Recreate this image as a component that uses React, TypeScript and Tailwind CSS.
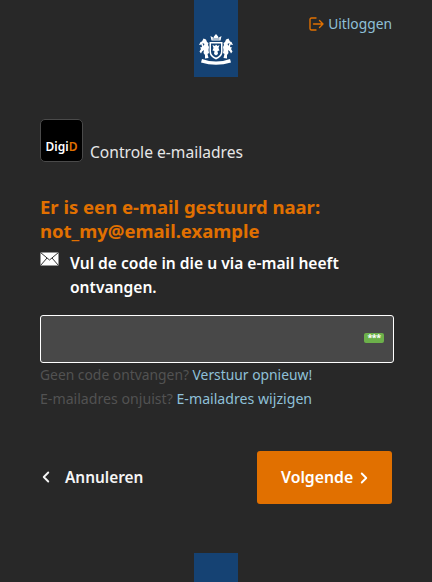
import { ChevronLeft, ChevronRight } from 'lucide-react'

const font = { fontFamily: '"Noto Sans", sans-serif' }

function Crest() {
  return (
    <svg width="36" height="34" viewBox="0 0 36 34" fill="none">
      {/* crown */}
      <path d="M13.5 8.5 L12.5 4 L15 5.5 L18 2 L21 5.5 L23.5 4 L22.5 8.5 Z" fill="#fff" />
      <path d="M14.5 7 H21.5" stroke="#154273" strokeWidth="0.7" />
      <path d="M15.5 3.5 V6 M20.5 3.5 V6" stroke="#154273" strokeWidth="0.5" />
      {/* shield */}
      <path d="M11.5 10 H24.5 V20 Q24.5 25 18 27.5 Q11.5 25 11.5 20 Z" fill="#fff" />
      <path d="M13 11.5 H23 V19.5 Q23 23.5 18 25.5 Q13 23.5 13 19.5 Z" fill="#154273" />
      <path d="M14.5 13 L17 14 L18 12.5 L19.5 14 L21.5 13 L20.5 16 L21.5 18.5 L19.5 19 L20 22 L18 23.5 L16 22 L16.5 19 L14.5 18.5 L15.5 16 Z" fill="#fff" />
      {/* left lion */}
      <path d="M5.5 6.5 L8 7.5 L9 10 L10.5 11 L10 13 L11 15 L10.5 18 L11 21 L9.5 22 L10.5 26 L7 26.5 L7 23 L5.5 21 L6 18 L4 19.5 L3 21.5 L1.5 19.5 L3 17 L2 15.5 L4 15 L3.5 12.5 L1 13 L2.5 10 L4 9.5 Z" fill="#fff" />
      <path d="M4.5 11 L6.5 12 L5.5 14 Z" fill="#154273" />
      {/* right lion */}
      <path d="M30.5 6.5 L28 7.5 L27 10 L25.5 11 L26 13 L25 15 L25.5 18 L25 21 L26.5 22 L25.5 26 L29 26.5 L29 23 L30.5 21 L30 18 L32 19.5 L33 21.5 L34.5 19.5 L33 17 L34 15.5 L32 15 L32.5 12.5 L35 13 L33.5 10 L32 9.5 Z" fill="#fff" />
      <path d="M31.5 11 L29.5 12 L30.5 14 Z" fill="#154273" />
      {/* ribbon */}
      <path d="M4 27 Q18 32 32 27 L33 30.5 Q18 35 3 30.5 Z" fill="#fff" />
    </svg>
  )
}

export default function App() {
  return (
    <div className="relative flex h-[582px] w-[432px] flex-col overflow-hidden bg-[#282828] px-10" style={font}>
      {/* Ribbon */}
      <div className="flex justify-center">
        <div className="flex h-[77px] w-11 items-end justify-center bg-[#154273] pb-[11px]">
          <Crest />
        </div>
      </div>

      <a className="absolute right-10 top-[14px] flex items-center gap-[3px] text-[13.8px] leading-5 text-[#8fc0d8]">
        <svg width="16" height="16" viewBox="0 0 16 16" fill="none" stroke="#e17000" strokeWidth="1.4">
          <path d="M7 2 H2.5 Q1 2 1 3.5 V12.5 Q1 14 2.5 14 H7" strokeLinecap="round" />
          <path d="M4.5 8 H14 M10.5 4.5 L14 8 L10.5 11.5" strokeLinecap="round" strokeLinejoin="round" />
        </svg>
        Uitloggen
      </a>

      {/* DigiD heading */}
      <div className="mt-[42px] flex items-end gap-[7px]">
        <div className="flex h-[43px] w-[43px] items-end justify-center rounded-[5px] border border-[#4a4a4a] bg-black pb-[6px] text-[12px] font-semibold leading-4">
          <span className="text-white">Digi</span>
          <span className="text-[#e17000]">D</span>
        </div>
        <h1 className="text-[15.6px] leading-5 text-[#e6e6e6]">Controle e-mailadres</h1>
      </div>

      <h2 className="mt-[33px] text-[18.5px] font-bold leading-6 text-[#e17000]">
        Er is een e-mail gestuurd naar:
        <br />
        not_my@email.example
      </h2>

      <div className="flex gap-[11px]">
        <svg className="mt-[9px] shrink-0" width="19" height="14" viewBox="0 0 19 14">
          <rect x="0.5" y="0.5" width="18" height="13" fill="#fff" />
          <path d="M0.5 0.5 L9.5 8 L18.5 0.5 M0.5 13.5 L7 6 M18.5 13.5 L12 6" fill="none" stroke="#333" strokeWidth="1" />
        </svg>
        <p className="mt-[8px] text-[15.6px] font-semibold leading-6 text-white">
          Vul de code in die u via e-mail heeft ontvangen.
        </p>
      </div>

      <div className="-mr-[2px] mt-[16px] flex h-[48px] items-center justify-end rounded-[3px] border border-white bg-[#484848] pr-[9px]">
        <div className="-mt-[3px] flex h-[10px] w-[20px] items-center justify-center rounded-[2px] bg-[#6cb04a] text-[9px] font-bold leading-none tracking-[-0.5px] text-white">
          ***
        </div>
      </div>

      <p className="text-[13.85px] leading-[24px] text-[#525252]">
        Geen code ontvangen? <a className="text-[#8fc0d8]">Verstuur opnieuw!</a>
      </p>
      <p className="text-[14.15px] leading-[24px] text-[#525252]">
        E-mailadres onjuist? <a className="text-[#8fc0d8]">E-mailadres wijzigen</a>
      </p>

      <div className="mt-[40px] flex items-center justify-between">
        <button className="-ml-[3px] flex items-center gap-[10px] text-[15.4px] font-semibold text-[#f5f5f5]">
          <ChevronLeft size={18} strokeWidth={2.5} />
          Annuleren
        </button>
        <button className="flex h-[53px] w-[135px] items-center justify-start gap-[2px] rounded-[3px] bg-[#e17000] pl-6 text-[15.8px] font-semibold text-white">
          Volgende
          <ChevronRight size={18} strokeWidth={2.5} />
        </button>
      </div>

      <div className="mt-auto flex justify-center">
        <div className="h-[29px] w-11 bg-[#154273]" />
      </div>
    </div>
  )
}
